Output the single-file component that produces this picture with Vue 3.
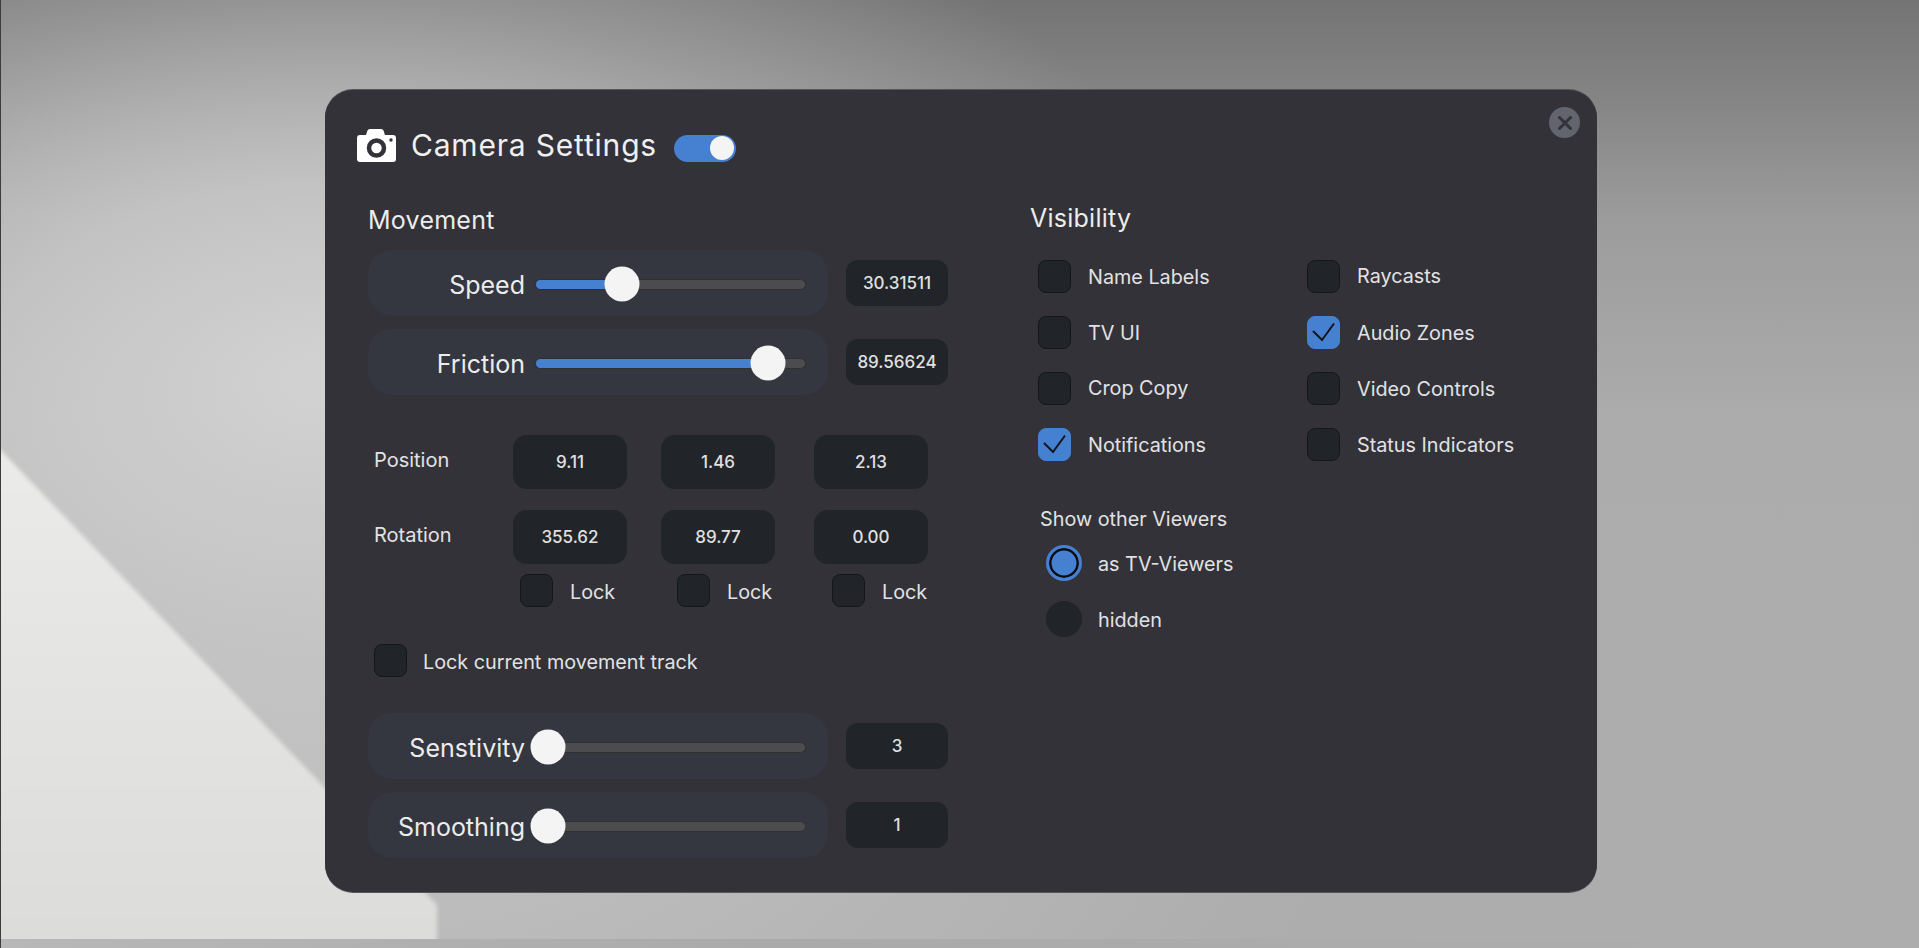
<template>
  <div class="page">
    <div class="wedge-wrap"><div class="wedge"></div></div>
    <div class="strip"></div>
    <div class="edge"></div>

    <div class="panel">
      <button class="close" aria-label="Close">
        <svg width="14" height="14" viewBox="0 0 14 14">
          <path d="M1.5 1.5 12.5 12.5M12.5 1.5 1.5 12.5" fill="none" stroke="#33333a" stroke-width="3" stroke-linecap="round" />
        </svg>
      </button>

      <header class="head">
        <svg class="cam" width="39" height="33" viewBox="0 0 39 33">
          <path d="M3 6h6l1.5-4.5Q11 0 13 0h11q2 0 2.500 1.500L28 6h8q3 0 3 3v21q0 3-3 3H3q-3 0-3-3V9q0-3 3-3z" fill="#fff" />
          <circle cx="19.500" cy="19" r="7.500" fill="#fff" stroke="#323238" stroke-width="4.500" />
          <circle cx="34" cy="11" r="1.700" fill="#323238" />
        </svg>
        <h1 class="title">Camera Settings</h1>
        <span class="toggle"><i></i></span>
      </header>

      <div class="body">
        <section class="left">
          <h2>Movement</h2>
          <div class="sliders">
            <div class="slider" v-for="s in sliders.slice(0, 2)" :key="s.label">
              <div class="card">
                <span class="slabel">{{ s.label }}</span>
                <div class="track">
                  <div class="fill" :style="{ width: center(s) + 'px' }"></div>
                  <div class="thumb" :style="{ left: center(s) + 'px' }"></div>
                </div>
              </div>
              <div class="val">{{ s.text }}</div>
            </div>
          </div>

          <div class="coords">
            <template v-for="row in coords" :key="row.label">
              <span class="clabel">{{ row.label }}</span>
              <div class="cbox" v-for="v in row.values" :key="v">{{ v }}</div>
            </template>
          </div>

          <div class="locks">
            <label class="check" v-for="n in 3" :key="n">
              <span class="box"></span>
              <span class="ltext">Lock</span>
            </label>
          </div>

          <label class="check track-lock">
            <span class="box"></span>
            <span class="ltext">Lock current movement track</span>
          </label>

          <div class="sliders">
            <div class="slider" v-for="s in sliders.slice(2)" :key="s.label">
              <div class="card">
                <span class="slabel">{{ s.label }}</span>
                <div class="track">
                  <div class="fill" :style="{ width: center(s) + 'px' }"></div>
                  <div class="thumb" :style="{ left: center(s) + 'px' }"></div>
                </div>
              </div>
              <div class="val">{{ s.text }}</div>
            </div>
          </div>
        </section>

        <section class="right">
          <h2>Visibility</h2>
          <div class="vis">
            <label class="check" v-for="o in visibility" :key="o.label">
              <span class="box" :class="{ on: o.on }">
                <svg v-if="o.on" width="33" height="33" viewBox="0 0 33 33">
                  <path d="M6 15 15 24 27 7.500" fill="none" stroke="#14141c" stroke-width="2" />
                </svg>
              </span>
              <span :class="{ up: o.up }">{{ o.label }}</span>
            </label>
          </div>

          <p class="viewers">Show other Viewers</p>
          <div class="radios">
            <label class="radio">
              <span class="dot on"></span>
              <span class="rtext">as TV-Viewers</span>
            </label>
            <label class="radio">
              <span class="dot"></span>
              <span class="rtext">hidden</span>
            </label>
          </div>
        </section>
      </div>
    </div>
  </div>
</template>

<script setup>
const sliders = [
  { label: 'Speed', text: '30.31511', pct: 30.31 },
  { label: 'Friction', text: '89.56624', pct: 89.56 },
  { label: 'Senstivity', text: '3', pct: 0 },
  { label: 'Smoothing', text: '1', pct: 0 },
]

const coords = [
  { label: 'Position', values: ['9.11', '1.46', '2.13'] },
  { label: 'Rotation', values: ['355.62', '89.77', '0.00'] },
]

// order is column by column per row
const visibility = [
  { label: 'Name Labels' },
  { label: 'Raycasts', up: true },
  { label: 'TV UI' },
  { label: 'Audio Zones', on: true },
  { label: 'Crop Copy', up: true },
  { label: 'Video Controls' },
  { label: 'Notifications', on: true },
  { label: 'Status Indicators' },
]

// thumb centre inside the track
const center = (s) => 11.5 + (s.pct / 100) * 246
</script>

<style scoped>
.page {
  position: relative;
  box-sizing: border-box;
  height: 948px;
  padding: 90px 0 0 325px;
  overflow: hidden;
  font-family: Inter, "Noto Sans", sans-serif;
  color: #e2e2e4;
  background:
    radial-gradient(ellipse 900px 560px at 330px 380px, rgba(210, 210, 210, 1) 0, rgba(202, 202, 202, 0.85) 35%, rgba(195, 195, 195, 0.4) 68%, rgba(180, 180, 180, 0) 100%),
    radial-gradient(ellipse 1000px 480px at 340px 780px, rgba(192, 192, 192, 1) 0, rgba(186, 186, 186, 0.85) 50%, rgba(172, 172, 172, 0) 100%),
    linear-gradient(180deg, #747474 0, #838383 90px, #9c9c9c 220px, #acacac 420px, #adadad 100%);
}
.wedge-wrap {
  position: absolute;
  left: -10px;
  top: 0;
  width: 470px;
  height: 950px;
  filter: blur(2px);
}
.wedge {
  height: 100%;
  background: linear-gradient(180deg, #ebebe9 450px, #dcdcda 939px);
  clip-path: polygon(0 439px, 335px 788px, 447px 905px, 447px 950px, 0 950px);
}
.strip {
  position: absolute;
  left: 0;
  right: 0;
  bottom: 0;
  height: 9px;
  background: linear-gradient(90deg, #b8b8b8, #aaaaaa 40%, #adadad);
}
.edge {
  position: absolute;
  left: 0;
  top: 0;
  bottom: 0;
  width: 1px;
  background: #3c3c3c;
}

.panel {
  position: relative;
  box-sizing: border-box;
  width: 1272px;
  height: 802px;
  border-radius: 28px;
  background: #323238;
  box-shadow: 0 -1px #55555a, 0 1px #55555a;
}
.close {
  position: absolute;
  top: 17px;
  right: 17px;
  display: flex;
  align-items: center;
  justify-content: center;
  width: 31px;
  height: 31px;
  padding: 0;
  border: none;
  border-radius: 50%;
  background: #62656d;
}

.head {
  display: flex;
  align-items: center;
  padding: 37px 0 0 32px;
}
.cam {
  margin-right: 15px;
}
.title {
  margin: 0;
  font-size: 30px;
  line-height: 36px;
  font-weight: 400;
  letter-spacing: 0.8px;
  color: #f0f0f0;
}
.toggle {
  display: flex;
  align-items: center;
  justify-content: flex-end;
  box-sizing: border-box;
  width: 62px;
  height: 27px;
  margin: 6px 0 0 17px;
  padding-right: 2px;
  border-radius: 14px;
  background: #4680d0;
}
.toggle i {
  width: 24px;
  height: 24px;
  border-radius: 50%;
  background: #f4f4f4;
}

.body {
  display: flex;
  gap: 83px;
  margin: 42px 0 0 43px;
}
.left {
  width: 580px;
}
.right {
  margin-top: -2px;
}
.right h2 {
  margin-left: -1px;
}
h2 {
  margin: 0;
  font-size: 25px;
  line-height: 30px;
  font-weight: 400;
  letter-spacing: 0.25px;
  color: #ececec;
}

.sliders {
  display: flex;
  flex-direction: column;
  gap: 13px;
  margin-top: 15px;
}
.slider {
  display: flex;
  align-items: center;
  gap: 18px;
}
.card {
  display: flex;
  align-items: center;
  gap: 10px;
  width: 460px;
  height: 66px;
  border-radius: 24px;
  background: #343640;
}
.slabel {
  width: 157px;
  margin-top: 3px;
  text-align: right;
  font-size: 25px;
  color: #ececec;
}
.track {
  position: relative;
  box-sizing: border-box;
  width: 271px;
  height: 11px;
  margin-top: 2px;
  border: 1px solid #303034;
  border-radius: 6px;
  background: #4c4c4e;
}
.fill {
  height: 100%;
  border-radius: 6px 0 0 6px;
  background: #4680d0;
}
.thumb {
  position: absolute;
  top: 50%;
  width: 35px;
  height: 35px;
  border-radius: 50%;
  background: #f4f4f4;
  transform: translate(-50%, -50%);
}
.val {
  display: flex;
  align-items: center;
  justify-content: center;
  width: 102px;
  height: 46px;
  border-radius: 12px;
  background: #212428;
  font-size: 17px;
  font-weight: 500;
  color: #e0e0e0;
}

.coords {
  display: grid;
  grid-template-columns: 139px 148px 153px 114px;
  row-gap: 21px;
  align-items: center;
  margin: 40px 0 0 6px;
}
.clabel {
  margin-bottom: 5px;
  font-size: 20px;
  color: #e2e2e4;
}
.cbox {
  display: flex;
  align-items: center;
  justify-content: center;
  width: 114px;
  height: 54px;
  border-radius: 14px;
  background: #212428;
  font-size: 17px;
  font-weight: 500;
  color: #e0e0e0;
}

.check {
  display: flex;
  align-items: center;
  gap: 17px;
  font-size: 19.800px;
  color: #e2e2e4;
}
.box {
  flex: none;
  box-sizing: border-box;
  width: 33px;
  height: 33px;
  border: 1px solid #15161a;
  border-radius: 8px;
  background: #212428;
}
.box svg {
  display: block;
  margin: -1px;
}
.box.on {
  border-color: #4680d0;
  background: #4680d0;
}
.ltext {
  margin-top: 2px;
}
.up {
  margin-bottom: 2px;
}
.locks {
  display: grid;
  grid-template-columns: 157px 155px auto;
  margin: 10px 0 0 152px;
}
.track-lock {
  gap: 16px;
  margin: 37px 0 0 6px;
}
.track-lock + .sliders {
  margin-top: 36px;
}

.vis {
  display: grid;
  grid-template-columns: 269px auto;
  row-gap: 23px;
  margin: 27px 0 0 7px;
}
.viewers {
  margin: 46px 0 0 9px;
  font-size: 19.800px;
  line-height: 24px;
}
.radios {
  display: flex;
  flex-direction: column;
  gap: 20px;
  margin: 14px 0 0 15px;
}
.radio {
  display: flex;
  align-items: center;
  gap: 16px;
  font-size: 19.800px;
}
.rtext {
  margin-top: 2px;
}
.dot {
  flex: none;
  box-sizing: border-box;
  width: 36px;
  height: 36px;
  border-radius: 50%;
  background: #212428;
}
.dot.on {
  border: 3px solid #4680d0;
  background: #4680d0;
  box-shadow: inset 0 0 0 2.500px #0c0c10;
}
</style>

<style>
html, body {
  margin: 0;
  height: 948px;
  overflow: hidden;
}
</style>
